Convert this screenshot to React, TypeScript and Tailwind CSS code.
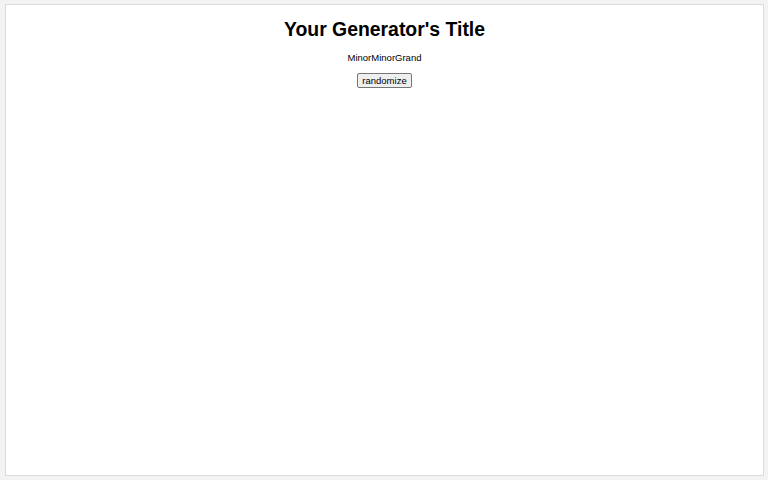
export default function App() {
  return (
    <div className="w-[768px] h-[480px] bg-[#f3f3f3] pt-[4px] pl-[5px] pr-[4px] pb-[4px] font-['Liberation_Sans',Arial,sans-serif]">
      <div className="h-full bg-white border border-[#dcdcdc] flex flex-col items-center text-black">
        <h1 className="mt-[12px] text-[19.4px] leading-[24px] font-bold">Your Generator's Title</h1>
        <p className="mt-[11px] text-[9.5px] leading-[12px]">MinorMinorGrand</p>
        <button className="mt-[9px] px-[4px] h-[15px] text-[9.5px] leading-[12px] bg-[#efefef] border border-[#767676] rounded-[2px]">
          randomize
        </button>
      </div>
    </div>
  )
}
